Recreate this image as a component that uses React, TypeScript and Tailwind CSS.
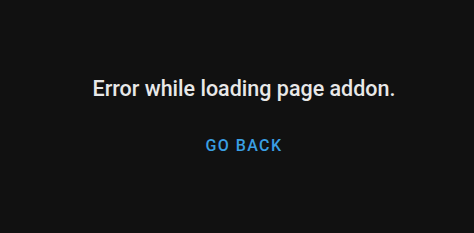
export default function App() {
  return (
    <div className="w-[474px] h-[233px] bg-[#111111] flex flex-col items-center pt-[75px] pl-[14px]" style={{ fontFamily: 'Roboto, "Liberation Sans", sans-serif' }}>
      <h1 className="text-[21.5px] leading-[28px] font-medium text-[#e8e8e8]">Error while loading page addon.</h1>
      <button className="mt-[27px] px-2 py-1 text-[16px] leading-[24px] font-medium tracking-[1.4px] text-[#3a9fe3] uppercase">Go back</button>
    </div>
  );
}
